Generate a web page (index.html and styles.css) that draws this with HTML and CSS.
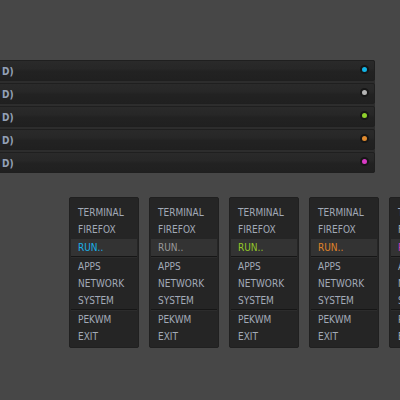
FILE: index.html
```html
<!DOCTYPE html>
<html>
<head>
<meta charset="utf-8">
<link rel="stylesheet" href="styles.css">
</head>
<body>
<div class="bars">
  <div class="bar"><span class="label">D)</span><span class="dot cyan"></span></div>
  <div class="bar"><span class="label">D)</span><span class="dot gray"></span></div>
  <div class="bar"><span class="label">D)</span><span class="dot green"></span></div>
  <div class="bar"><span class="label">D)</span><span class="dot orange"></span></div>
  <div class="bar"><span class="label">D)</span><span class="dot magenta"></span></div>
</div>
<div class="menus">
  <div class="menu">
    <div class="item">TERMINAL</div><div class="item">FIREFOX</div>
    <div class="item sel cyan-t">RUN..</div><div class="sep"></div>
    <div class="item">APPS</div><div class="item">NETWORK</div><div class="item">SYSTEM</div><div class="sep"></div>
    <div class="item">PEKWM</div><div class="item">EXIT</div>
  </div>
  <div class="menu">
    <div class="item">TERMINAL</div><div class="item">FIREFOX</div>
    <div class="item sel gray-t">RUN..</div><div class="sep"></div>
    <div class="item">APPS</div><div class="item">NETWORK</div><div class="item">SYSTEM</div><div class="sep"></div>
    <div class="item">PEKWM</div><div class="item">EXIT</div>
  </div>
  <div class="menu">
    <div class="item">TERMINAL</div><div class="item">FIREFOX</div>
    <div class="item sel green-t">RUN..</div><div class="sep"></div>
    <div class="item">APPS</div><div class="item">NETWORK</div><div class="item">SYSTEM</div><div class="sep"></div>
    <div class="item">PEKWM</div><div class="item">EXIT</div>
  </div>
  <div class="menu">
    <div class="item">TERMINAL</div><div class="item">FIREFOX</div>
    <div class="item sel orange-t">RUN..</div><div class="sep"></div>
    <div class="item">APPS</div><div class="item">NETWORK</div><div class="item">SYSTEM</div><div class="sep"></div>
    <div class="item">PEKWM</div><div class="item">EXIT</div>
  </div>
  <div class="menu">
    <div class="item">TERMINAL</div><div class="item">FIREFOX</div>
    <div class="item sel magenta-t">RUN..</div><div class="sep"></div>
    <div class="item">APPS</div><div class="item">NETWORK</div><div class="item">SYSTEM</div><div class="sep"></div>
    <div class="item">PEKWM</div><div class="item">EXIT</div>
  </div>
</div>
</body>
</html>
```
FILE: styles.css
```css
html, body {
  margin: 0;
  padding: 0;
  width: 400px;
  height: 400px;
  overflow: hidden;
  background: #474747;
  font-family: "DejaVu Sans Condensed", "DejaVu Sans", sans-serif;
  font-stretch: condensed;
}
.bars {
  margin-top: 60px;
  margin-left: -6px;
  width: 381px;
  display: flex;
  flex-direction: column;
  gap: 2px;
  background: #2d2d2d;
  border-radius: 2px;
}
.bar {
  height: 21px;
  box-sizing: border-box;
  display: flex;
  align-items: center;
  justify-content: space-between;
  padding: 0 5px 2px 7px;
  background: linear-gradient(#2a2a2a 0, #272727 40%, #222222 55%, #202020 100%);
  border: 1px solid #1f1f1f;
  border-radius: 2px;
}
.label {
  color: #93a0b6;
  font-size: 10px;
  font-weight: bold;
  padding-top: 3px;
}
.dot {
  width: 5px;
  height: 5px;
  border-radius: 50%;
  border: 2px solid #161616;
}
.cyan { background: #12b4e6; }
.gray { background: #b4b4b4; }
.green { background: #8fd02c; }
.orange { background: #e08a2e; }
.magenta { background: #d83ac4; }

.menus {
  margin-top: 24px;
  margin-left: 69px;
  display: flex;
  gap: 10px;
}
.menu {
  flex: 0 0 70px;
  width: 70px;
  height: 151px;
  box-sizing: border-box;
  padding: 6px 1px 0 1px;
  background: #252525;
  border: 1px solid #202020;
  border-radius: 2px;
}
.item {
  height: 17px;
  line-height: 17px;
  padding-left: 7px;
  font-size: 10px;
  color: #a2aab8;
  white-space: nowrap;
}
.sel {
  margin-top: 1px;
  background: #333333;
}
.sep {
  height: 1px;
  margin: 0 0 1px 0;
  background: #161616;
  box-shadow: 0 1px 0 #2c2c2c;
}
.cyan-t { color: #1ab0e8; }
.gray-t { color: #9a9a9a; }
.green-t { color: #94c828; }
.orange-t { color: #e08428; }
.magenta-t { color: #d040c0; }
```
